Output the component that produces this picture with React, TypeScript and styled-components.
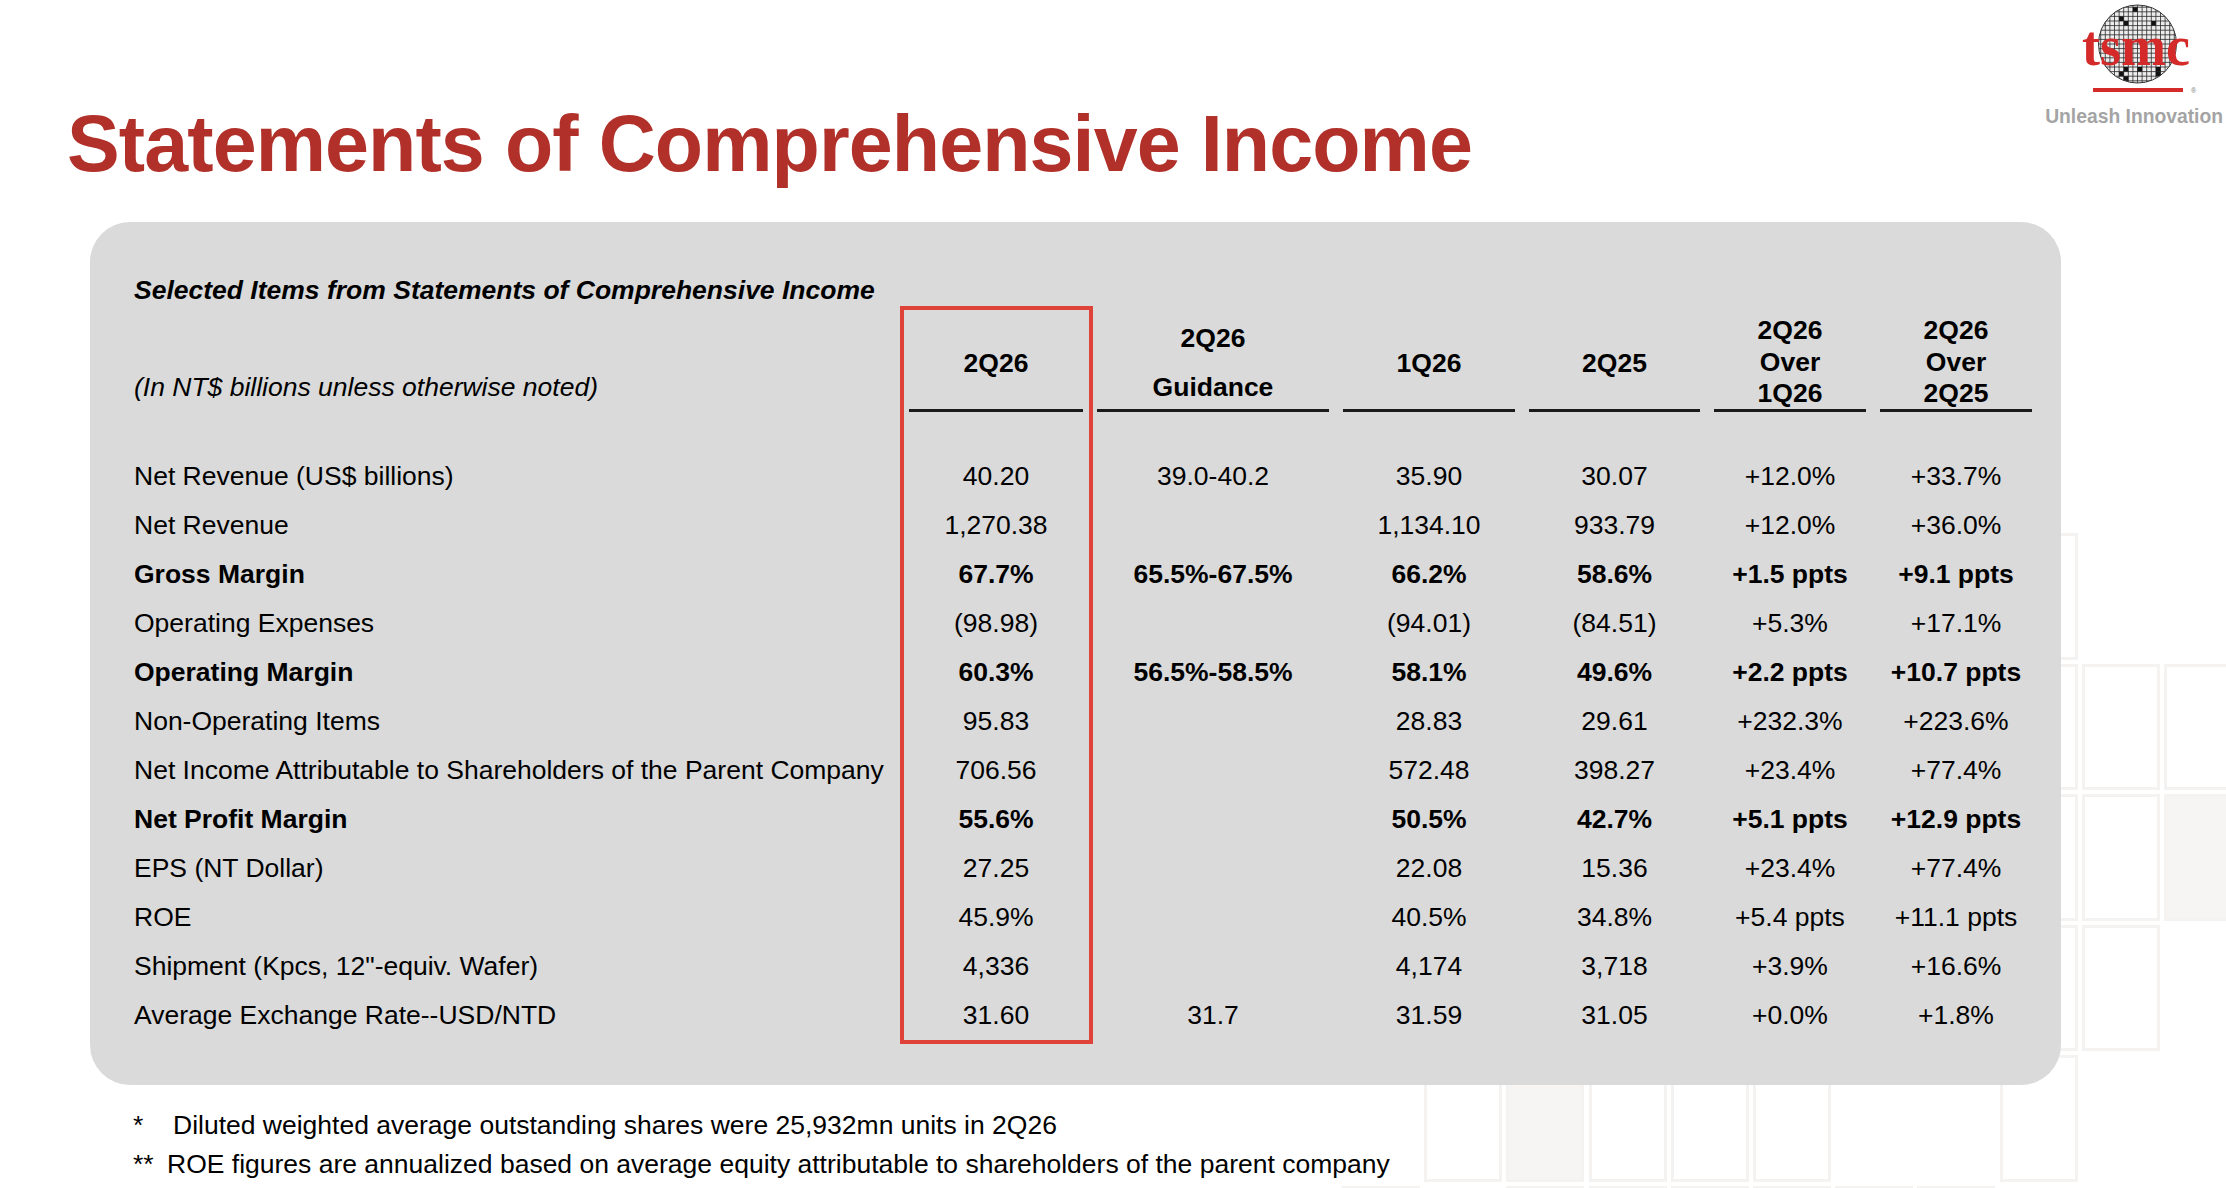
import React from "react";
import styled, { createGlobalStyle, css } from "styled-components";

const GlobalStyle = createGlobalStyle`
  html, body {
    margin: 0;
    padding: 0;
    background: #ffffff;
  }
  body {
    width: 2226px;
    height: 1188px;
    overflow: hidden;
    font-family: "Liberation Sans", Arial, Helvetica, sans-serif;
    color: #000000;
  }
`;

const Slide = styled.div`
  position: relative;
  width: 2226px;
  height: 1188px;
  overflow: hidden;
  background: #ffffff;
`;

/* faint decorative tiles in the slide background */
const Backdrop = styled.div`
  position: absolute;
  left: 1342px;
  top: 533px;
  display: grid;
  grid-template-columns: repeat(11, 78px);
  grid-template-rows: repeat(6, 126.6px);
  column-gap: 4.2px;
  row-gap: 4px;
  z-index: 0;
`;

const Tile = styled.div<{ $r: number; $c: number; $fill?: boolean }>`
  grid-row: ${(p) => p.$r};
  grid-column: ${(p) => p.$c};
  border: 3px solid #f4f3f2;
  background: ${(p) => (p.$fill ? "#f6f5f4" : "transparent")};
`;

const Content = styled.div`
  position: relative;
  z-index: 1;
  display: flex;
  flex-direction: column;
`;

const TopBar = styled.header`
  display: flex;
  justify-content: space-between;
  align-items: flex-start;
`;

const Title = styled.h1`
  margin: 0;
  padding: 104px 0 0 67px;
  font-size: 79px;
  line-height: 79px;
  font-weight: 700;
  letter-spacing: -0.9px;
  color: #b1312a;
  white-space: nowrap;
`;

const Brand = styled.div`
  display: flex;
  flex-direction: column;
  align-items: flex-end;
  padding-right: 3px;
`;

const BrandMark = styled.svg`
  display: block;
  margin-right: 23px;
`;

const Tagline = styled.div`
  margin-top: 11px;
  font-size: 19.3px;
  line-height: 20px;
  font-weight: 700;
  color: #a4a4a4;
  white-space: nowrap;
`;

const Panel = styled.section`
  margin: 39px 0 0 90px;
  width: 1971px;
  box-sizing: border-box;
  padding: 53px 0 45px 44px;
  background: #dadada;
  border-radius: 40px;
`;

const Caption = styled.div`
  font-size: 26.5px;
  line-height: 30px;
  font-weight: 700;
  font-style: italic;
  margin-bottom: 5px;
  white-space: nowrap;
`;

const Table = styled.div`
  display: flex;
  gap: 14px;
  align-items: flex-start;
`;

const Column = styled.div<{ $w: number; $highlight?: boolean }>`
  flex: none;
  width: ${(p) => p.$w}px;
  display: flex;
  flex-direction: column;
  ${(p) =>
    p.$highlight &&
    css`
      margin: -4px -10px -4px -9px;
      padding: 0 6px 0 5px;
      border: 4px solid #df4238;
    `}
`;

const HeaderCell = styled.div<{ $lh: number; $note?: boolean }>`
  box-sizing: border-box;
  height: 102px;
  margin-bottom: 40px;
  padding-top: 6px;
  padding-bottom: ${(p) => (p.$note ? 7 : 0)}px;
  border-bottom: 3px solid ${(p) => (p.$note ? "transparent" : "#1b1b1b")};
  display: flex;
  flex-direction: column;
  justify-content: ${(p) => (p.$note ? "flex-end" : "center")};
  align-items: ${(p) => (p.$note ? "flex-start" : "center")};
  font-size: 26.5px;
  line-height: ${(p) => p.$lh}px;
  font-weight: ${(p) => (p.$note ? 400 : 700)};
  font-style: ${(p) => (p.$note ? "italic" : "normal")};
  white-space: nowrap;
`;

const HeadLine = styled.span`
  display: block;
`;

const Cell = styled.div<{ $bold?: boolean; $left?: boolean }>`
  height: 49px;
  line-height: 49px;
  font-size: 26.5px;
  font-weight: ${(p) => (p.$bold ? 700 : 400)};
  text-align: ${(p) => (p.$left ? "left" : "center")};
  white-space: nowrap;
`;

const Notes = styled.div`
  margin: 21px 0 0 133px;
  display: flex;
  flex-direction: column;
`;

const Note = styled.div`
  display: flex;
  font-size: 26.5px;
  line-height: 39px;
  white-space: nowrap;
`;

const Marker = styled.span<{ $w: number }>`
  flex: none;
  width: ${(p) => p.$w}px;
`;

type Row = { label: string; bold?: boolean; v: string[] };

const rows: Row[] = [
  { label: "Net Revenue (US$ billions)", v: ["40.20", "39.0-40.2", "35.90", "30.07", "+12.0%", "+33.7%"] },
  { label: "Net Revenue", v: ["1,270.38", "", "1,134.10", "933.79", "+12.0%", "+36.0%"] },
  { label: "Gross Margin", bold: true, v: ["67.7%", "65.5%-67.5%", "66.2%", "58.6%", "+1.5 ppts", "+9.1 ppts"] },
  { label: "Operating Expenses", v: ["(98.98)", "", "(94.01)", "(84.51)", "+5.3%", "+17.1%"] },
  { label: "Operating Margin", bold: true, v: ["60.3%", "56.5%-58.5%", "58.1%", "49.6%", "+2.2 ppts", "+10.7 ppts"] },
  { label: "Non-Operating Items", v: ["95.83", "", "28.83", "29.61", "+232.3%", "+223.6%"] },
  {
    label: "Net Income Attributable to Shareholders of the Parent Company",
    v: ["706.56", "", "572.48", "398.27", "+23.4%", "+77.4%"],
  },
  { label: "Net Profit Margin", bold: true, v: ["55.6%", "", "50.5%", "42.7%", "+5.1 ppts", "+12.9 ppts"] },
  { label: "EPS (NT Dollar)", v: ["27.25", "", "22.08", "15.36", "+23.4%", "+77.4%"] },
  { label: "ROE", v: ["45.9%", "", "40.5%", "34.8%", "+5.4 ppts", "+11.1 ppts"] },
  { label: "Shipment (Kpcs, 12\"-equiv. Wafer)", v: ["4,336", "", "4,174", "3,718", "+3.9%", "+16.6%"] },
  { label: "Average Exchange Rate--USD/NTD", v: ["31.60", "31.7", "31.59", "31.05", "+0.0%", "+1.8%"] },
];

const columns: { w: number; head: string[]; lh: number; highlight?: boolean }[] = [
  { w: 174, head: ["2Q26"], lh: 30, highlight: true },
  { w: 232, head: ["2Q26", "Guidance"], lh: 49 },
  { w: 172, head: ["1Q26"], lh: 30 },
  { w: 171, head: ["2Q25"], lh: 30 },
  { w: 152, head: ["2Q26", "Over", "1Q26"], lh: 31.5 },
  { w: 152, head: ["2Q26", "Over", "2Q25"], lh: 31.5 },
];

const tiles: { r: number; c: number; fill?: boolean }[] = [
  { r: 1, c: 9 },
  { r: 2, c: 9 },
  { r: 2, c: 10 },
  { r: 2, c: 11 },
  { r: 3, c: 9 },
  { r: 3, c: 10 },
  { r: 3, c: 11, fill: true },
  { r: 4, c: 9 },
  { r: 4, c: 10 },
  { r: 5, c: 2 },
  { r: 5, c: 3, fill: true },
  { r: 5, c: 4 },
  { r: 5, c: 5 },
  { r: 5, c: 6 },
  { r: 5, c: 9 },
  { r: 6, c: 1 },
  { r: 6, c: 3 },
  { r: 6, c: 4 },
  { r: 6, c: 5 },
  { r: 6, c: 6 },
  { r: 6, c: 7 },
  { r: 6, c: 8 },
];

const STEP = 4.6;
const CX = 57.5;
const CY = 44;
const R = 39;
const gridK = Array.from({ length: 19 }, (_, k) => k - 9);
const dies: [number, number][] = [
  [-4, -6],
  [-3, -5],
  [-1, -8],
  [3, -5],
  [-3, 5],
  [-4, 6],
  [-3, 7],
  [0, 5],
  [4, 5],
  [4, 6],
];

const Logo = () => (
  <BrandMark width={120} height={96} viewBox="0 0 120 96">
    <defs>
      <clipPath id="waferClip">
        <circle cx={CX} cy={CY} r={R} />
      </clipPath>
    </defs>
    <circle cx={CX} cy={CY} r={R} fill="#ececec" />
    <g clipPath="url(#waferClip)" stroke="#2a2a2a" strokeWidth={0.8}>
      {gridK.map((k) => (
        <line key={"v" + k} x1={CX + k * STEP} y1={0} x2={CX + k * STEP} y2={96} />
      ))}
      {gridK.map((k) => (
        <line key={"h" + k} x1={0} y1={CY + k * STEP} x2={120} y2={CY + k * STEP} />
      ))}
      {dies.map(([i, j]) => (
        <rect key={i + "_" + j} x={CX + i * STEP} y={CY + j * STEP} width={STEP} height={STEP} fill="#111" stroke="none" />
      ))}
    </g>
    <circle cx={CX} cy={CY} r={R} fill="none" stroke="#333" strokeWidth={1} />
    <text
      x={2}
      y={65}
      fontFamily="'Liberation Serif', 'Times New Roman', serif"
      fontWeight={700}
      fontSize={56}
      fill="#d42a2a"
      textLength={108}
      lengthAdjust="spacingAndGlyphs"
    >
      tsmc
    </text>
    <rect x={13} y={88} width={90} height={4} fill="#d42a2a" />
    <text x={111} y={93} fontSize={7} fill="#777" fontFamily="'Liberation Sans', Arial, sans-serif">
      ®
    </text>
  </BrandMark>
);

export default function App() {
  return (
    <Slide>
      <GlobalStyle />
      <Backdrop>
        {tiles.map((t) => (
          <Tile key={t.r + "-" + t.c} $r={t.r} $c={t.c} $fill={t.fill} />
        ))}
      </Backdrop>
      <Content>
        <TopBar>
          <Title>Statements of Comprehensive Income</Title>
          <Brand>
            <Logo />
            <Tagline>Unleash Innovation</Tagline>
          </Brand>
        </TopBar>
        <Panel>
          <Caption>Selected Items from Statements of Comprehensive Income</Caption>
          <Table>
            <Column $w={761}>
              <HeaderCell $lh={30} $note>
                <HeadLine>(In NT$ billions unless otherwise noted)</HeadLine>
              </HeaderCell>
              {rows.map((r) => (
                <Cell key={r.label} $left $bold={r.bold}>
                  {r.label}
                </Cell>
              ))}
            </Column>
            {columns.map((c, ci) => (
              <Column key={ci} $w={c.w} $highlight={c.highlight}>
                <HeaderCell $lh={c.lh}>
                  {c.head.map((h, hi) => (
                    <HeadLine key={hi}>{h}</HeadLine>
                  ))}
                </HeaderCell>
                {rows.map((r) => (
                  <Cell key={r.label} $bold={r.bold}>
                    {r.v[ci]}
                  </Cell>
                ))}
              </Column>
            ))}
          </Table>
        </Panel>
        <Notes>
          <Note>
            <Marker $w={40}>*</Marker>
            <span>Diluted weighted average outstanding shares were 25,932mn units in 2Q26</span>
          </Note>
          <Note>
            <Marker $w={34}>**</Marker>
            <span>ROE figures are annualized based on average equity attributable to shareholders of the parent company</span>
          </Note>
        </Notes>
      </Content>
    </Slide>
  );
}
